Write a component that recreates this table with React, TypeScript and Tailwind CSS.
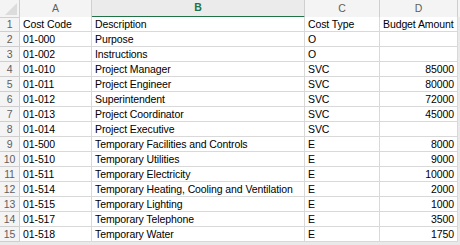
import React from "react";

const rows: [string, string, string, string][] = [
  ["Cost Code", "Description", "Cost Type", "Budget Amount"],
  ["01-000", "Purpose", "O", ""],
  ["01-002", "Instructions", "O", ""],
  ["01-010", "Project Manager", "SVC", "85000"],
  ["01-011", "Project Engineer", "SVC", "80000"],
  ["01-012", "Superintendent", "SVC", "72000"],
  ["01-013", "Project Coordinator", "SVC", "45000"],
  ["01-014", "Project Executive", "SVC", ""],
  ["01-500", "Temporary Facilities and Controls", "E", "8000"],
  ["01-510", "Temporary Utilities", "E", "9000"],
  ["01-511", "Temporary Electricity", "E", "10000"],
  ["01-514", "Temporary Heating, Cooling and Ventilation", "E", "2000"],
  ["01-515", "Temporary Lighting", "E", "1000"],
  ["01-517", "Temporary Telephone", "E", "3500"],
  ["01-518", "Temporary Water", "E", "1750"],
];

const cols = "grid-cols-[20px_72px_213px_75px_78px_2px]";

export default function App() {
  return (
    <div className="w-[460px] h-[245px] bg-[#e9e9e9] overflow-hidden font-['Liberation_Sans',sans-serif] text-[10.5px] tracking-[-0.1px] text-black">
      {/* column headers */}
      <div className={`grid ${cols} h-[17px] bg-[#f4f4f4] text-[#5f5f5f]`}>
        <div className="relative border-r border-b border-[#cfcfcf]">
          <svg className="absolute right-[2px] bottom-[2px]" width="12" height="12" viewBox="0 0 12 12">
            <polygon points="12,0 12,12 0,12" fill="#dcdcdc" />
          </svg>
        </div>
        <div className="flex items-center justify-center border-r border-b border-[#cfcfcf]">A</div>
        <div className="flex items-center justify-center border-r border-b-2 border-b-[#217346] border-r-[#cfcfcf] text-[#217346] font-bold bg-[#ebebeb]">B</div>
        <div className="flex items-center justify-center border-r border-b border-[#cfcfcf]">C</div>
        <div className="flex items-center justify-center border-r border-b border-[#cfcfcf]">D</div>
        <div />
      </div>
      {rows.map((r, i) => (
        <div key={i} className={`grid ${cols} h-[15px] leading-[14px]`}>
          <div className="bg-[#f4f4f4] text-[#5f5f5f] text-center border-r border-b border-[#cfcfcf]">{i + 1}</div>
          <div className="bg-white px-[3px] border-r border-b border-[#d9d9d9] whitespace-nowrap overflow-hidden">{r[0]}</div>
          <div className="bg-white px-[3px] border-r border-b border-[#d9d9d9] whitespace-nowrap overflow-hidden">{r[1]}</div>
          <div className="bg-white px-[3px] border-r border-b border-[#d9d9d9] whitespace-nowrap overflow-hidden">{r[2]}</div>
          <div className={`bg-white px-[3px] border-r border-b border-[#d9d9d9] whitespace-nowrap overflow-hidden ${i === 0 ? "text-left" : "text-right"}`}>{r[3]}</div>
          <div />
        </div>
      ))}
    </div>
  );
}
